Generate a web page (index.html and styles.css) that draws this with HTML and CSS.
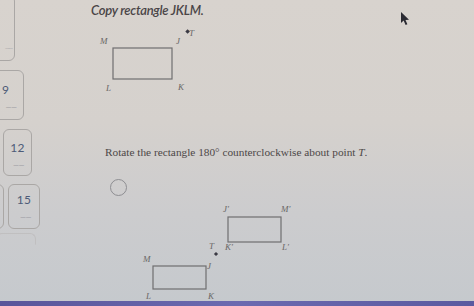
FILE: index.html
```html
<!DOCTYPE html>
<html>
<head>
<meta charset="utf-8">
<link rel="stylesheet" href="styles.css">
</head>
<body>
<div class="screen">
  <aside class="sidebar">
    <div class="card card-1"><span class="dash">— —</span></div>
    <div class="card card-2"><span class="num">9</span><span class="dash">— —</span></div>
    <div class="card card-3"><span class="num">12</span><span class="dash">— —</span></div>
    <div class="row-4">
      <div class="card card-edge"></div>
      <div class="card card-4"><span class="num">15</span><span class="dash">— —</span></div>
    </div>
    <div class="card card-5"></div>
  </aside>
  <main class="main">
    <h1 class="title">Copy rectangle JKLM.</h1>
    <svg class="fig1" width="130" height="75" viewBox="0 0 130 75">
      <g class="lbl">
        <text x="9" y="24">M</text>
        <text x="85" y="24">J</text>
        <text x="98" y="16">T</text>
        <text x="15" y="71">L</text>
        <text x="87" y="70">K</text>
      </g>
      <rect x="95" y="10" width="3.2" height="3.2" transform="rotate(45 96.6 11.6)" class="pt"/>
      <rect x="22" y="28" width="59" height="31" class="box"/>
    </svg>
    <p class="question">Rotate the rectangle 180° counterclockwise about point <i>T</i>.</p>
    <span class="radio"></span>
    <svg class="fig2" width="180" height="103" viewBox="0 0 180 103">
      <g class="lbl">
        <text x="93" y="14">J′</text>
        <text x="151" y="14">M′</text>
        <text x="95" y="52">K′</text>
        <text x="152" y="52">L′</text>
        <text x="79" y="51">T</text>
        <text x="13" y="64">M</text>
        <text x="77" y="71">J</text>
        <text x="16" y="101">L</text>
        <text x="78" y="101">K</text>
      </g>
      <rect x="84.5" y="54.5" width="3" height="3" transform="rotate(45 86 56)" class="pt"/>
      <rect x="98" y="19" width="53" height="25" class="box"/>
      <rect x="23" y="68" width="53" height="23" class="box"/>
    </svg>
  </main>
  <svg class="cursor" width="10" height="16" viewBox="0 0 10 16">
    <path d="M1 1 L1 12 L3.6 9.6 L5.6 14 L7.4 13.2 L5.5 9 L9 8.8 Z" fill="#2b2b33"/>
  </svg>
</div>
<footer class="bar"></footer>
</body>
</html>
```
FILE: styles.css
```css
html, body {
  margin: 0;
  padding: 0;
}
body {
  width: 474px;
  height: 306px;
  overflow: hidden;
  display: flex;
  flex-direction: column;
  background: linear-gradient(180deg, #d8d3ce 0%, #d5d1cd 40%, #ccccce 70%, #c5c9cd 100%);
  font-family: "Liberation Serif", serif;
}
.screen {
  position: relative;
  flex: 1;
  display: flex;
  overflow: hidden;
}
.sidebar {
  width: 91px;
  flex: none;
  display: flex;
  flex-direction: column;
  align-items: flex-start;
}
.card {
  box-sizing: border-box;
  border: 1px solid #aaa7a5;
  border-radius: 6px;
  display: flex;
  flex-direction: column;
  align-items: center;
  flex: none;
}
.num {
  font-family: "Lato", sans-serif;
  font-size: 12px;
  line-height: 12px;
  color: #4d5b78;
  letter-spacing: 0.3px;
}
.dash {
  font-family: "Liberation Sans", sans-serif;
  font-size: 5px;
  line-height: 5px;
  color: #85868f;
  letter-spacing: -0.5px;
}
.card-1 {
  width: 40px;
  height: 66px;
  margin-top: -5px;
  margin-left: -25px;
  padding-top: 49px;
  align-items: flex-end;
  padding-right: 2px;
}
.card-1 .dash {
  font-size: 4px;
  letter-spacing: -0.8px;
}
.card-2 {
  width: 36px;
  height: 50px;
  margin-top: 9px;
  margin-left: -12px;
  padding-top: 13px;
}
.card-2 .num { align-self: flex-start; margin-left: 13px; }
.card-2 .dash { margin-top: 9px; margin-left: 10px; }
.card-3 {
  width: 29px;
  height: 47px;
  margin-top: 9px;
  margin-left: 3px;
  padding-top: 12px;
}
.card-3 .dash { margin-top: 9px; margin-left: 2px; }
.row-4 {
  display: flex;
  gap: 4px;
  margin-top: 8px;
  margin-left: -30px;
}
.card-edge {
  width: 34px;
  height: 45px;
}
.card-4 {
  width: 32px;
  height: 45px;
  padding-top: 9px;
}
.card-4 .dash { margin-top: 9px; margin-left: 3px; }
.card-5 {
  width: 40px;
  height: 12px;
  margin-top: 4px;
  margin-left: -4px;
  border-color: #c0bfc0;
  border-bottom-color: transparent;
  border-radius: 6px 6px 0 0;
}
.main {
  flex: 1;
  display: flex;
  flex-direction: column;
  align-items: flex-start;
}
.title {
  margin: 1px 0 0 0;
  font-family: "Lato", sans-serif;
  font-style: italic;
  font-weight: 600;
  font-size: 13px;
  line-height: 19px;
  letter-spacing: -0.25px;
  color: #4a4547;
}
.fig1 {
  display: block;
  margin: 0;
}
.lbl text {
  font-family: "Liberation Serif", serif;
  font-style: italic;
  font-size: 9px;
  fill: #6a6766;
}
.box {
  fill: none;
  stroke: #6f6e70;
  stroke-width: 1.2;
}
.pt {
  fill: #3b3a44;
}
.question {
  margin: 50px 0 0 14px;
  font-size: 11.3px;
  line-height: 14px;
  color: #4d4848;
}
.radio {
  box-sizing: border-box;
  display: block;
  width: 17px;
  height: 17px;
  border: 1.5px solid #8e8e92;
  border-radius: 50%;
  margin: 20px 0 0 19px;
}
.fig2 {
  display: block;
  margin: 2px 0 0 39px;
}
.cursor {
  position: absolute;
  left: 400px;
  top: 11px;
}
.bar {
  flex: none;
  height: 5px;
  background: linear-gradient(90deg, #58559a, #6b6ab0 50%, #5a5aa0);
}
```
